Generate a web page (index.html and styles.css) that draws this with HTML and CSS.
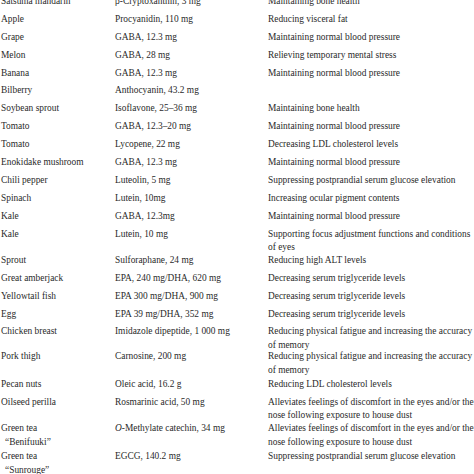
FILE: index.html
```html
<!DOCTYPE html>
<html>
<head>
<meta charset="utf-8">
<link rel="stylesheet" href="styles.css">
</head>
<body>
<div class="table">
  <div class="row"><div class="c1">Satsuma mandarin</div><div class="c2">β-Cryptoxanthin, 3 mg</div><div class="c3">Maintaining bone health</div></div>
  <div class="row"><div class="c1">Apple</div><div class="c2">Procyanidin, 110 mg</div><div class="c3">Reducing visceral fat</div></div>
  <div class="row"><div class="c1">Grape</div><div class="c2">GABA, 12.3 mg</div><div class="c3">Maintaining normal blood pressure</div></div>
  <div class="row"><div class="c1">Melon</div><div class="c2">GABA, 28 mg</div><div class="c3">Relieving temporary mental stress</div></div>
  <div class="row"><div class="c1">Banana</div><div class="c2">GABA, 12.3 mg</div><div class="c3">Maintaining normal blood pressure</div></div>
  <div class="row"><div class="c1">Bilberry</div><div class="c2">Anthocyanin, 43.2 mg</div><div class="c3"></div></div>
  <div class="row"><div class="c1">Soybean sprout</div><div class="c2">Isoflavone, 25–36 mg</div><div class="c3">Maintaining bone health</div></div>
  <div class="row"><div class="c1">Tomato</div><div class="c2">GABA, 12.3–20 mg</div><div class="c3">Maintaining normal blood pressure</div></div>
  <div class="row"><div class="c1">Tomato</div><div class="c2">Lycopene, 22 mg</div><div class="c3">Decreasing LDL cholesterol levels</div></div>
  <div class="row"><div class="c1">Enokidake mushroom</div><div class="c2">GABA, 12.3 mg</div><div class="c3">Maintaining normal blood pressure</div></div>
  <div class="row"><div class="c1">Chili pepper</div><div class="c2">Luteolin, 5 mg</div><div class="c3">Suppressing postprandial serum glucose elevation</div></div>
  <div class="row"><div class="c1">Spinach</div><div class="c2">Lutein, 10mg</div><div class="c3">Increasing ocular pigment contents</div></div>
  <div class="row"><div class="c1">Kale</div><div class="c2">GABA, 12.3mg</div><div class="c3">Maintaining normal blood pressure</div></div>
  <div class="row tall"><div class="c1">Kale</div><div class="c2">Lutein, 10 mg</div><div class="c3">Supporting focus adjustment functions and conditions<br>of eyes</div></div>
  <div class="row"><div class="c1">Sprout</div><div class="c2">Sulforaphane, 24 mg</div><div class="c3">Reducing high ALT levels</div></div>
  <div class="row"><div class="c1">Great amberjack</div><div class="c2">EPA, 240 mg/DHA, 620 mg</div><div class="c3">Decreasing serum triglyceride levels</div></div>
  <div class="row"><div class="c1">Yellowtail fish</div><div class="c2">EPA 300 mg/DHA, 900 mg</div><div class="c3">Decreasing serum triglyceride levels</div></div>
  <div class="row"><div class="c1">Egg</div><div class="c2">EPA 39 mg/DHA, 352 mg</div><div class="c3">Decreasing serum triglyceride levels</div></div>
  <div class="row tall t25"><div class="c1">Chicken breast</div><div class="c2">Imidazole dipeptide, 1 000 mg</div><div class="c3">Reducing physical fatigue and increasing the accuracy<br>of memory</div></div>
  <div class="row tall t28"><div class="c1">Pork thigh</div><div class="c2">Carnosine, 200 mg</div><div class="c3">Reducing physical fatigue and increasing the accuracy<br>of memory</div></div>
  <div class="row"><div class="c1">Pecan nuts</div><div class="c2">Oleic acid, 16.2 g</div><div class="c3">Reducing LDL cholesterol levels</div></div>
  <div class="row tall"><div class="c1">Oilseed perilla</div><div class="c2">Rosmarinic acid, 50 mg</div><div class="c3">Alleviates feelings of discomfort in the eyes and/or the<br>nose following exposure to house dust</div></div>
  <div class="row tall t28"><div class="c1">Green tea<br><span class="indent">“Benifuuki”</span></div><div class="c2"><i>O</i>-Methylate catechin, 34 mg</div><div class="c3">Alleviates feelings of discomfort in the eyes and/or the<br>nose following exposure to house dust</div></div>
  <div class="row tall"><div class="c1">Green tea<br><span class="indent">“Sunrouge”</span></div><div class="c2">EGCG, 140.2 mg</div><div class="c3">Suppressing postprandial serum glucose elevation</div></div>
</div>
</body>
</html>
```
FILE: styles.css
```css
html, body {
  margin: 0;
  padding: 0;
  background: #ffffff;
  overflow: hidden;
}
body {
  width: 474px;
  height: 474px;
  font-family: "Liberation Serif", "Times New Roman", serif;
  font-size: 9.4px;
  color: #2a2a2a;
}
.table {
  margin-top: -7.3px;
  display: flex;
  flex-direction: column;
}
.row {
  display: grid;
  grid-template-columns: 115px 153px 1fr;
  height: 17.9px;
  box-sizing: border-box;
  padding-top: 2.25px;
  line-height: 13.4px;
  white-space: nowrap;
}
.row.tall { height: 26.4px; }
.row.t25 { height: 25px; }
.row.t28 { height: 27.7px; }
.c1 { padding-left: 1px; }
.indent { padding-left: 4px; }
```
